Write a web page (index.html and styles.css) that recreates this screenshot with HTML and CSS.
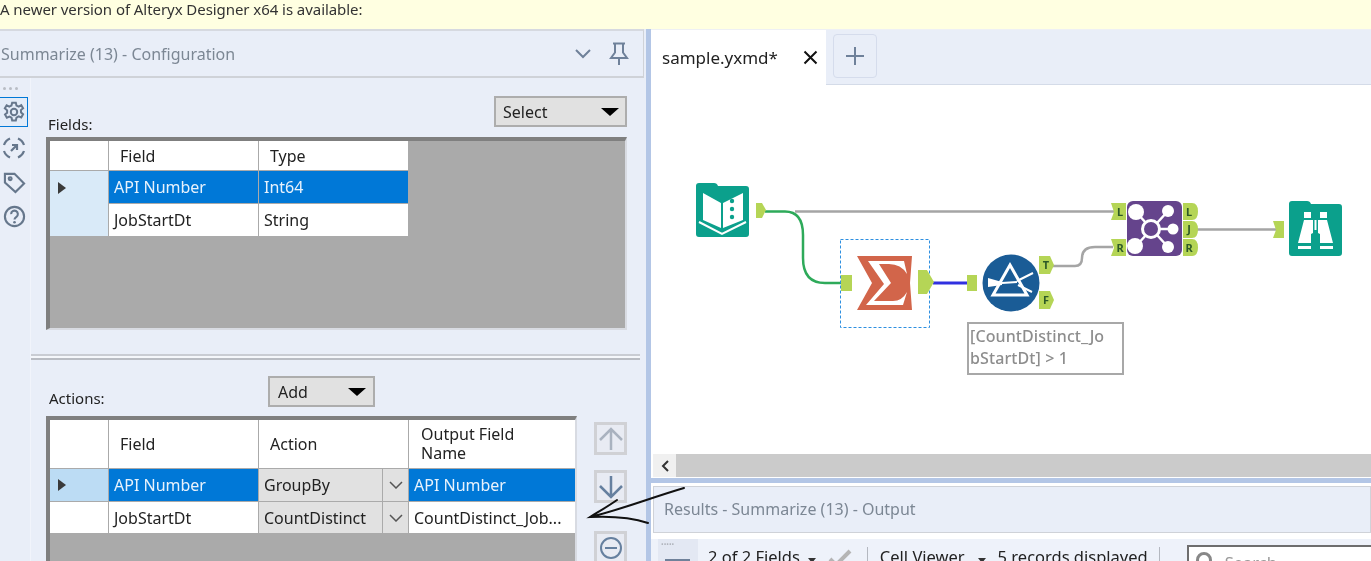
FILE: index.html
```html
<!DOCTYPE html>
<html lang="en">
<head>
<meta charset="utf-8">
<title>Alteryx Designer</title>
<link rel="stylesheet" href="styles.css">
</head>
<body>
<div class="banner">A newer version of Alteryx Designer x64 is available:</div>
<div class="main">
  <section class="left">
    <header class="panel-head">
      <span class="panel-title">Summarize (13) - Configuration</span>
      <svg class="chev" width="16" height="10" viewBox="0 0 16 10"><path d="M1 1l7 7 7-7" fill="none" stroke="#6f819a" stroke-width="2"/></svg>
      <svg class="pin" width="20" height="24" viewBox="0 0 20 24"><path d="M4 1.500h12M6 1.500v9L2 16h16l-4-5.500v-9M10 16v7" fill="none" stroke="#6f819a" stroke-width="2"/></svg>
    </header>
    <div class="config">
      <nav class="side">
        <div class="dots"><i></i><i></i><i></i></div>
        <div class="side-btn active">
          <svg width="22" height="22" viewBox="0 0 24 24"><g fill="none" stroke="#66778c" stroke-width="2.200"><circle cx="12" cy="12" r="3.500"/><path d="M10 2h4l.7 3 2.500 1.100 2.700-1.500 2 3.300-2.400 2 .2 2.600 2.200 2-2 3.500-2.800-1.200-2.400 1.400-.7 3h-4l-.7-3-2.300-1.200-2.800 1.300-2-3.500 2.300-2v-2.600L2 7.900l2-3.300 2.800 1.500 2.400-1.100z"/></g></svg>
        </div>
        <div class="side-btn">
          <svg width="24" height="24" viewBox="0 0 24 24"><g fill="none" stroke="#66778c" stroke-width="2.200"><path d="M2 9a11 11 0 0 1 6-6.500M16 2.500A11 11 0 0 1 22 9M22 15a11 11 0 0 1-6 6.500M8 21.500A11 11 0 0 1 2 15"/><path d="M9 15l6-6M10 9h5v5"/></g></svg>
        </div>
        <div class="side-btn">
          <svg width="23" height="23" viewBox="0 0 24 24"><g fill="none" stroke="#66778c" stroke-width="2.200"><path d="M2 3h10l10 10-9 9L2 12z"/><circle cx="7.500" cy="8" r="1.500"/></g></svg>
        </div>
        <div class="side-btn">
          <svg width="23" height="23" viewBox="0 0 24 24"><circle cx="12" cy="12" r="10" fill="none" stroke="#66778c" stroke-width="2.200"/><path d="M8.500 9.500a3.500 3.500 0 1 1 5.500 2.800c-1.300.9-2 1.400-2 2.700" fill="none" stroke="#66778c" stroke-width="2.200"/><circle cx="12" cy="18" r="1.400" fill="#66778c"/></svg>
        </div>
      </nav>
      <div class="content">
        <div class="fields-head">
          <label class="lbl">Fields:</label>
          <div class="drop select-drop"><span>Select</span><i class="tri"></i></div>
        </div>
        <div class="grid grid-fields">
          <div class="cell head"></div>
          <div class="cell head pad">Field</div>
          <div class="cell head pad">Type</div>
          <div class="cell rowhead tall"><i class="rowtri"></i></div>
          <div class="cell sel">API Number</div>
          <div class="cell sel">Int64</div>
          <div class="cell">JobStartDt</div>
          <div class="cell">String</div>
        </div>
        <div class="split"></div>
        <div class="actions-head">
          <label class="lbl">Actions:</label>
          <div class="drop add-drop"><span>Add</span><i class="tri"></i></div>
        </div>
        <div class="actions-body">
          <div class="grid grid-actions">
            <div class="cell head"></div>
            <div class="cell head pad">Field</div>
            <div class="cell head pad">Action</div>
            <div class="cell head wrap">Output Field Name</div>
            <div class="cell rowhead-cur"><i class="rowtri"></i></div>
            <div class="cell sel">API Number</div>
            <div class="cell combo"><span class="combo-text">GroupBy</span><span class="combo-btn"><svg width="14" height="8" viewBox="0 0 14 8"><path d="M1 1l6 6 6-6" fill="none" stroke="#555" stroke-width="1.500"/></svg></span></div>
            <div class="cell sel">API Number</div>
            <div class="cell"></div>
            <div class="cell">JobStartDt</div>
            <div class="cell combo"><span class="combo-text">CountDistinct</span><span class="combo-btn"><svg width="14" height="8" viewBox="0 0 14 8"><path d="M1 1l6 6 6-6" fill="none" stroke="#555" stroke-width="1.500"/></svg></span></div>
            <div class="cell">CountDistinct_Job...</div>
          </div>
          <div class="move">
            <div class="move-btn"><svg width="26" height="26" viewBox="0 0 26 26"><path d="M13 24V3M2 14L13 3l11 11" fill="none" stroke="#a9b2bf" stroke-width="2.500"/></svg></div>
            <div class="move-btn down"><svg width="26" height="26" viewBox="0 0 26 26"><path d="M13 2v21M2 12l11 11 11-11" fill="none" stroke="#66809f" stroke-width="2.500"/></svg></div>
            <div class="move-btn minus"><svg width="24" height="24" viewBox="0 0 24 24"><circle cx="12" cy="12" r="10" fill="none" stroke="#66809f" stroke-width="2"/><path d="M6 12h12" stroke="#66809f" stroke-width="2"/></svg></div>
          </div>
        </div>
      </div>
    </div>
  </section>
  <div class="vsplit"></div>
  <section class="right">
    <div class="tabs">
      <div class="tab"><span>sample.yxmd*</span>
        <svg width="15" height="15" viewBox="0 0 15 15"><path d="M1.500 1.500l12 12M13.500 1.500l-12 12" stroke="#111" stroke-width="2"/></svg>
      </div>
      <div class="plus"><svg width="20" height="20" viewBox="0 0 20 20"><path d="M10 1v18M1 10h18" stroke="#6f819a" stroke-width="2"/></svg></div>
    </div>
    <svg class="canvas" width="720" height="369" viewBox="651 85 720 369">
      <path d="M765 211.500H785Q803 211.500 803 235V258Q803 283 825 283H845" fill="none" stroke="#2eaa5a" stroke-width="2.500"/>
      <path d="M795 211.500H1115" fill="none" stroke="#a5a5a5" stroke-width="2.500"/>
      <path d="M933 283H972" stroke="#3030e0" stroke-width="3"/>
      <path d="M1053 266H1075Q1082 266 1082 258Q1082 247 1095 247H1113" fill="none" stroke="#a5a5a5" stroke-width="2.500"/>
      <path d="M1197 229.500H1276" stroke="#a5a5a5" stroke-width="2.500"/>

      <!-- input -->
      <path d="M699 183h15q3 0 4 3h28q3 0 3 3v45q0 3-3 3h-47q-3 0-3-3v-48q0-3 3-3z" fill="#0ba08c"/>
      <path d="M703 193l18 10v25l-18-8zM723 203l20-10v27l-20 8z" fill="#fff"/>
      <path d="M699 222l23 12 24-12" fill="none" stroke="#fff" stroke-width="2"/>
      <circle cx="732" cy="201" r="2.200" fill="#0ba08c"/><circle cx="732" cy="209" r="2.200" fill="#0ba08c"/><circle cx="732" cy="217" r="2.200" fill="#0ba08c"/>
      <path d="M756 203h6l4 7-4 8h-6z" fill="#b5d556"/>

      <!-- summarize -->
      <rect x="840.500" y="239.500" width="89" height="88" fill="none" stroke="#2d8fe0" stroke-width="1" stroke-dasharray="3 2"/>
      <path d="M857 256h55l-2 27 2 27h-55l15-27z" fill="#d2654a"/>
      <path d="M868 261H904L907 274Q901 264 889 264H879L891 283L874 301H893Q902 301 907 292L903 305H866L884 284Z" fill="#fff"/>
      <path d="M841 275h11v16h-11z" fill="#b5d556"/>
      <path d="M918 270h9l7 12-7 12h-9z" fill="#b5d556"/>

      <!-- filter -->
      <path d="M967 275h10v16h-10z" fill="#b5d556"/>
      <circle cx="1011" cy="283" r="28.500" fill="#1a5c96"/>
      <path d="M1010 265l17 30h-34z" fill="none" stroke="#fff" stroke-width="3"/>
      <path d="M988 278l14 4v3l-14 2z" fill="#fff"/>
      <path d="M1002 283l15-1M1017 281l16-8M1018 285l14 7" fill="none" stroke="#fff" stroke-width="2"/>
      <path d="M1039 256h11l4 9-4 9h-11z" fill="#b5d556"/>
      <path d="M1039 291h11l4 9-4 9h-11z" fill="#b5d556"/>
      <text class="port" x="1046" y="269">T</text>
      <text class="port" x="1046" y="304">F</text>

      <rect x="968" y="323" width="155" height="51" fill="#fff" stroke="#a8a8a8" stroke-width="2"/>
      <text class="anno" x="970" y="342">[CountDistinct_Jo</text>
      <text class="anno" x="970" y="364">bStartDt] &gt; 1</text>

      <!-- join -->
      <path d="M1111 203h15v17h-15l3-8z" fill="#b5d556"/>
      <path d="M1111 239h15v17h-15l3-8z" fill="#b5d556"/>
      <text class="port" x="1120" y="216">L</text>
      <text class="port" x="1120" y="252">R</text>
      <rect x="1127" y="201" width="55" height="55" rx="6" fill="#65448c"/>
      <g stroke="#fff" stroke-width="2.500"><path d="M1136 212L1168 247M1168 211L1136 246M1151 229H1173"/></g>
      <circle cx="1136" cy="212" r="8" fill="#fff"/><circle cx="1168" cy="211" r="6" fill="#fff"/><circle cx="1173" cy="229" r="5.500" fill="#fff"/><circle cx="1135" cy="246" r="8" fill="#fff"/><circle cx="1168" cy="247" r="6" fill="#fff"/>
      <circle cx="1151" cy="229" r="8.500" fill="#65448c" stroke="#fff" stroke-width="3"/>
      <path d="M1183 203h9q6 0 6 8.500t-6 8.500h-9z" fill="#b5d556"/>
      <path d="M1183 221h9q6 0 6 8.500t-6 8.500h-9z" fill="#b5d556"/>
      <path d="M1183 239h9q6 0 6 8.500t-6 8.500h-9z" fill="#b5d556"/>
      <text class="port" x="1189" y="216">L</text>
      <text class="port" x="1189" y="233">J</text>
      <text class="port" x="1189" y="252">R</text>

      <!-- browse -->
      <path d="M1273 221h11v17h-11l3-8z" fill="#b5d556"/>
      <path d="M1292 201h15q3 0 4 3h28q3 0 3 3v46q0 3-3 3h-47q-3 0-3-3v-49q0-3 3-3z" fill="#0ba08c"/>
      <g fill="#fff">
        <path d="M1304 212h7v6h-7zM1320 212h7v6h-7z"/>
        <path d="M1304 220h9v13l-2 1v9h-13zM1327 220h-9v13l2 1v9h13z"/>
        <path d="M1298 246h13v3h-13zM1320 246h13v3h-13z"/>
        <path d="M1314.500 220h2v10h-2z"/>
      </g>
    </svg>
    <div class="hscroll"><span class="hs-btn"><svg width="10" height="12" viewBox="0 0 10 12"><path d="M8 1L3 6l5 5" fill="none" stroke="#333" stroke-width="2"/></svg></span><span class="hs-track"></span></div>
    <div class="hsplit"></div>
    <div class="results-head">Results - Summarize (13) - Output</div>
    <div class="toolbar">
      <div class="tb-tab"><div class="tb-dots">•••••</div><div class="tb-icon"></div></div>
      <span class="tb-text t1">2 of 2 Fields</span><i class="mini-tri"></i>
      <svg class="check" width="24" height="18" viewBox="0 0 24 18"><path d="M2 10l6 6L22 2" fill="none" stroke="#b5b5b5" stroke-width="4"/></svg>
      <span class="tb-sep"></span>
      <span class="tb-text">Cell Viewer</span><i class="mini-tri wide"></i>
      <span class="tb-text">5 records displayed</span>
      <span class="tb-sep"></span>
      <div class="search"><svg width="18" height="18" viewBox="0 0 18 18"><circle cx="9" cy="9" r="6.500" fill="none" stroke="#888" stroke-width="3"/></svg><span>Search</span></div>
    </div>
  </section>
</div>
<svg class="scribble" width="110" height="50" viewBox="580 480 110 50"><path d="M684 488C650 498 620 510 590 517M617 500C607 507 598 512 590 517C610 516 630 517 648 523" fill="none" stroke="#111" stroke-width="2" stroke-linecap="round"/></svg>
</body>
</html>
```
FILE: styles.css
```css
* { box-sizing: border-box; }
html, body { margin: 0; padding: 0; }
body {
  width: 1371px;
  height: 561px;
  overflow: hidden;
  position: relative;
  font-family: "Noto Sans", "Open Sans", sans-serif;
  font-size: 16px;
  color: #1c2430;
  background: #fff;
}
.banner {
  height: 29px;
  line-height: 18px;
  font-size: 15px;
  letter-spacing: -0.06px;
  background: #ffffe1;
  color: #333;
  filter: blur(0.3px);
}
.main { display: flex; height: 532px; overflow: hidden; filter: blur(0.3px); }

/* left panel */
.left { width: 646px; flex: none; background: #e9eef8; overflow: hidden; }
.panel-head {
  height: 49px;
  margin-right: 2px;
  display: flex;
  align-items: center;
  padding: 0 14px 0 1px;
  border-top: 2px solid #d6d9e0;
  border-bottom: 2px solid #cfd2d8;
  border-right: 1px solid #cfd2d8;
}
.panel-title { flex: 1; color: #7c8794; font-size: 16px; }
.chev { margin-right: 18px; }
.config { display: flex; height: 483px; }
.side { width: 31px; flex: none; border-right: 1px solid #f1f4fb; }
.dots { height: 19px; display: flex; gap: 3px; padding: 9px 0 0 3px; }
.dots i { width: 3px; height: 3px; border-radius: 50%; background: #b9bdc5; }
.side-btn { height: 34px; width: 28px; display: flex; align-items: center; justify-content: center; }
.side-btn.active { height: 30px; margin-bottom: 4px; border: 1px solid #0078d7; border-left: 0; background: #e3ecf8; }
.content { flex: 1; padding-top: 18px; }
.fields-head {
  height: 41px;
  display: flex;
  justify-content: space-between;
  align-items: flex-start;
  padding: 0 19px 0 17px;
}
.lbl { font-size: 15px; line-height: 20px; color: #222; }
.fields-head .lbl { align-self: flex-end; margin-bottom: 3px; }
.drop {
  display: flex;
  align-items: center;
  justify-content: space-between;
  height: 31px;
  background: #e1e1e1;
  border: 2px solid #adadad;
  color: #222;
}
.select-drop { width: 133px; padding: 0 6px 0 7px; }
.add-drop { width: 107px; height: 31px; padding: 0 7px 0 8px; }
.tri { width: 0; height: 0; border: solid transparent; border-width: 8px 9px 0; border-top-color: #000; }

/* grids */
.grid {
  display: grid;
  gap: 1px;
  background: #aaa;
  border-top: 4px solid #7f7f7f;
  border-left: 4px solid #7f7f7f;
  justify-content: start;
  align-content: start;
}
.grid-fields {
  width: 581px;
  height: 193px;
  margin-left: 15px;
  grid-template-columns: 58px 149px 149px;
  grid-template-rows: 29px 32px 32px;
  border-right: 2px solid #d8dbe2;
  border-bottom: 2px solid #d8dbe2;
}
.cell {
  background: #fff;
  display: flex;
  align-items: center;
  padding: 0 5px;
  white-space: nowrap;
  overflow: hidden;
  color: #222;
}
.head { background: #fff; }
.pad { padding-left: 11px; }
.wrap { white-space: normal; line-height: 19px; padding: 0 40px 0 12px; }
.sel { background: #0078d7; color: #e8f2fc; }
.rowhead { background: #d9eaf8; align-items: flex-start; }
.tall { grid-row: span 2; }
.rowhead-cur { background: #bcdcf4; }
.rowtri {
  display: block;
  width: 0; height: 0;
  border: solid transparent;
  border-width: 6px 0 6px 8px;
  border-left-color: #3a3a3a;
  margin-left: 3px;
}
.rowhead .rowtri { margin-top: 11px; }
.split {
  height: 6px;
  margin: 24px 6px 0 0;
  border-top: 2px solid #c9ccd3;
  border-bottom: 2px solid #b9bcc3;
  background: #f5f7fb;
}
.actions-head {
  height: 56px;
  padding: 16px 0 0 18px;
  display: flex;
  align-items: flex-start;
}
.actions-head .lbl { width: 219px; margin-top: 12px; }
.actions-body { display: flex; }
.grid-actions {
  width: 531px;
  height: 200px;
  margin-left: 15px;
  grid-template-columns: 58px 149px 149px 166px;
  grid-template-rows: 48px 32px 31px;
  border-right: 2px solid #d8dbe2;
}
.combo { background: #aaa; padding: 0; gap: 1px; align-items: stretch; }
.combo-text { flex: 1; background: #e1e1e1; display: flex; align-items: center; padding-left: 5px; }
.combo-btn { width: 25px; background: #e1e1e1; display: flex; align-items: center; justify-content: center; }
.move { margin: 6px 0 0 17px; width: 33px; }
.move-btn {
  width: 33px;
  height: 33px;
  border: 3px solid #d0d1d5;
  background: #e8ebf3;
  display: flex;
  align-items: center;
  justify-content: center;
}
.down { margin-top: 15px; }
.minus { margin-top: 28px; }

/* right */
.vsplit { width: 5px; flex: none; background: #b3c6e6; }
.right { width: 720px; flex: none; overflow: hidden; background: #fff; }
.tabs { height: 56px; display: flex; align-items: flex-start; background: #e9eef8; border-top: 1px solid #eef0f4; border-bottom: 1px solid #d4dbe8; }
.tab {
  width: 175px;
  height: 55px;
  background: #fff;
  display: flex;
  align-items: center;
  justify-content: space-between;
  padding: 0 8px 0 11px;
  font-size: 17px;
  color: #222;
}
.plus {
  width: 44px;
  height: 44px;
  margin: 4px 0 0 7px;
  border: 1px solid #d5dcec;
  border-radius: 4px;
  display: flex;
  align-items: center;
  justify-content: center;
}
.canvas { display: block; }
.port { font: bold 11px "Noto Sans", sans-serif; fill: #2d5a27; text-anchor: middle; }
.anno { font: 500 16px "Noto Sans", sans-serif; letter-spacing: 0.1px; fill: #8d8d8d; }
.hscroll { height: 23px; display: flex; background: #fff; }
.hs-btn { width: 23px; margin-left: 2px; background: #f0f0f0; display: flex; align-items: center; justify-content: center; }
.hs-track { flex: 1; background: #cbcbcb; }
.hsplit { height: 5px; margin-top: 1px; background: #b3c6e6; }
.results-head {
  height: 47px;
  margin: 3px 0 0 2px;
  padding-left: 10px;
  line-height: 44px;
  background: #e9eef8;
  border: 1px solid #cfd2d8;
  color: #7c8794;
  font-size: 16px;
}
.toolbar {
  height: 40px;
  margin-top: 6px;
  padding-left: 7px;
  display: flex;
  align-items: flex-start;
  background: #eef2fa;
  font-size: 16.500px;
  color: #222;
}
.tb-tab { width: 40px; height: 40px; background: #e3e8f3; flex: none; }
.tb-dots { font-size: 7px; line-height: 12px; color: #b0b4bc; padding-left: 3px; }
.tb-icon { width: 25px; height: 10px; margin: 8px 0 0 7px; background: #6f819a; }
.tb-text { line-height: 22px; margin-top: 7px; white-space: nowrap; }
.t1 { margin-left: 10px; }
.mini-tri { width: 0; height: 0; margin: 19px 9px 0 8px; border: solid transparent; border-width: 5px 4px 0; border-top-color: #333; }
.wide { margin: 19px 12px 0 13px; }
.check { margin: 10px 15px 0 3px; }
.tb-sep { width: 1px; height: 24px; margin: 8px 12px 0 0; background: #b4b8c0; }
.tb-text + .tb-sep { margin-left: 11px; }
.search {
  width: 184px;
  height: 30px;
  margin: 6px 0 0 15px;
  border: 2px solid #6e6e6e;
  border-bottom: 0;
  border-right: 0;
  background: #fff;
  display: flex;
  align-items: flex-start;
  gap: 12px;
  padding: 4px 0 0 6px;
  color: #999;
}

/* hand-drawn arrow over the screenshot */
.scribble { position: absolute; left: 580px; top: 480px; }
```
